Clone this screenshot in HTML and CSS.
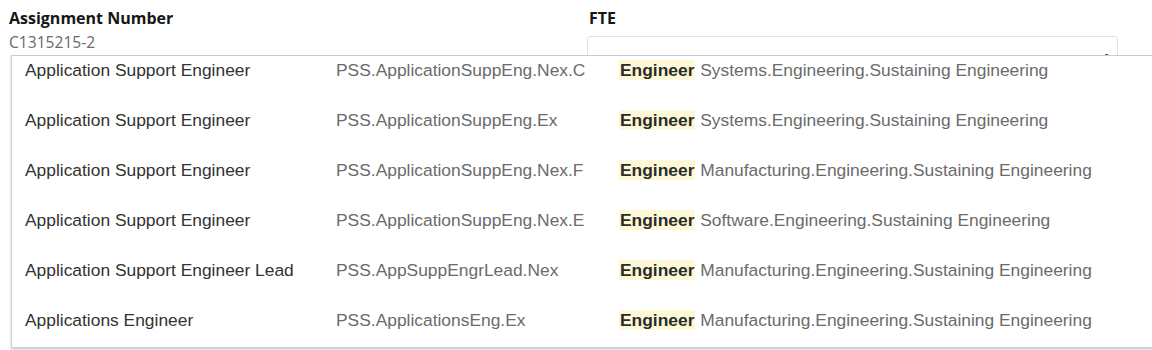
FILE: index.html
```html
<!DOCTYPE html>
<html>
<head>
<meta charset="utf-8">
<link rel="stylesheet" href="styles.css">
</head>
<body>
<div class="page">
  <div class="form">
    <div class="field">
      <div class="label">Assignment Number</div>
      <div class="value">C1315215-2</div>
    </div>
    <div class="field right">
      <div class="label">FTE</div>
      <div class="input num">1</div>
    </div>
    <div class="field"></div>
    <div class="field right"></div>
    <div class="field"></div>
    <div class="field right"></div>
    <div class="field"></div>
    <div class="field right"></div>
    <div class="field"></div>
    <div class="field right">
      <div class="label low">Projected End Date</div>
    </div>
  </div>

  <div class="popup">
    <div class="list">
      <div class="row">
        <span class="c1">Application Support Engineer</span>
        <span class="c2">PSS.ApplicationSuppEng.Nex.C</span>
        <span class="c3"><mark class="hl">Engineer</mark> Systems.Engineering.Sustaining Engineering</span>
      </div>
      <div class="row">
        <span class="c1">Application Support Engineer</span>
        <span class="c2">PSS.ApplicationSuppEng.Ex</span>
        <span class="c3"><mark class="hl">Engineer</mark> Systems.Engineering.Sustaining Engineering</span>
      </div>
      <div class="row">
        <span class="c1">Application Support Engineer</span>
        <span class="c2">PSS.ApplicationSuppEng.Nex.F</span>
        <span class="c3"><mark class="hl">Engineer</mark> Manufacturing.Engineering.Sustaining Engineering</span>
      </div>
      <div class="row">
        <span class="c1">Application Support Engineer</span>
        <span class="c2">PSS.ApplicationSuppEng.Nex.E</span>
        <span class="c3"><mark class="hl">Engineer</mark> Software.Engineering.Sustaining Engineering</span>
      </div>
      <div class="row">
        <span class="c1">Application Support Engineer Lead</span>
        <span class="c2">PSS.AppSuppEngrLead.Nex</span>
        <span class="c3"><mark class="hl">Engineer</mark> Manufacturing.Engineering.Sustaining Engineering</span>
      </div>
      <div class="row">
        <span class="c1">Applications Engineer</span>
        <span class="c2">PSS.ApplicationsEng.Ex</span>
        <span class="c3"><mark class="hl">Engineer</mark> Manufacturing.Engineering.Sustaining Engineering</span>
      </div>
    </div>
  </div>
</div>
</body>
</html>
```

FILE: styles.css
```css
html, body {
  margin: 0;
  padding: 0;
  overflow: hidden;
  background: #ffffff;
}

.page {
  position: relative;
  width: 1152px;
  height: 350px;
  overflow: hidden;
}

.form {
  display: grid;
  grid-template-columns: 578px 531px;
  column-gap: 0;
  row-gap: 21px;
  padding: 7px 0 0 9px;
}

.field {
  height: 63px;
  display: flex;
  flex-direction: column;
}

.label {
  font-family: "Open Sans", "Noto Sans", sans-serif;
  font-weight: 700;
  font-size: 16px;
  line-height: 22px;
  height: 22px;
  color: #161616;
}

.label.low {
  margin-top: 2px;
}

.field.right .label {
  padding-left: 2px;
}

.value {
  font-family: "Open Sans", "Noto Sans", sans-serif;
  font-size: 15.6px;
  line-height: 22px;
  margin-top: 2px;
  color: #6a6a6a;
}

.input {
  margin-top: 7px;
  height: 34px;
  box-sizing: border-box;
  border: 1px solid #dfe3e7;
  border-radius: 3px;
  font-family: "Liberation Sans", Arial, sans-serif;
  font-size: 14px;
  color: #333;
}

.input.num {
  display: flex;
  justify-content: flex-end;
  align-items: flex-end;
  padding: 0 7px 3px 0;
  font-weight: bold;
  font-size: 12px;
}

.popup {
  position: absolute;
  left: 11px;
  top: 55px;
  width: 1200px;
  height: 293px;
  box-sizing: border-box;
  border: 1px solid #c6cdd4;
  background: #ffffff;
  box-shadow: 0 2px 3px rgba(0, 0, 0, 0.18);
  overflow: hidden;
}

.list {
  margin-top: -11px;
}

.row {
  display: grid;
  grid-template-columns: 311px 283px 1fr;
  align-items: center;
  height: 50px;
  padding-left: 13px;
  font-family: "Liberation Sans", Arial, sans-serif;
  font-size: 17.4px;
  line-height: 20px;
  white-space: nowrap;
}

.c1 {
  color: #333333;
}

.c2 {
  color: #6b6b6b;
}

.c3 {
  color: #6b6b6b;
}

.hl {
  background: #fdf9d6;
  color: #2b2b2b;
  font-weight: bold;
  padding: 0 1px 0 1px;
}
```
